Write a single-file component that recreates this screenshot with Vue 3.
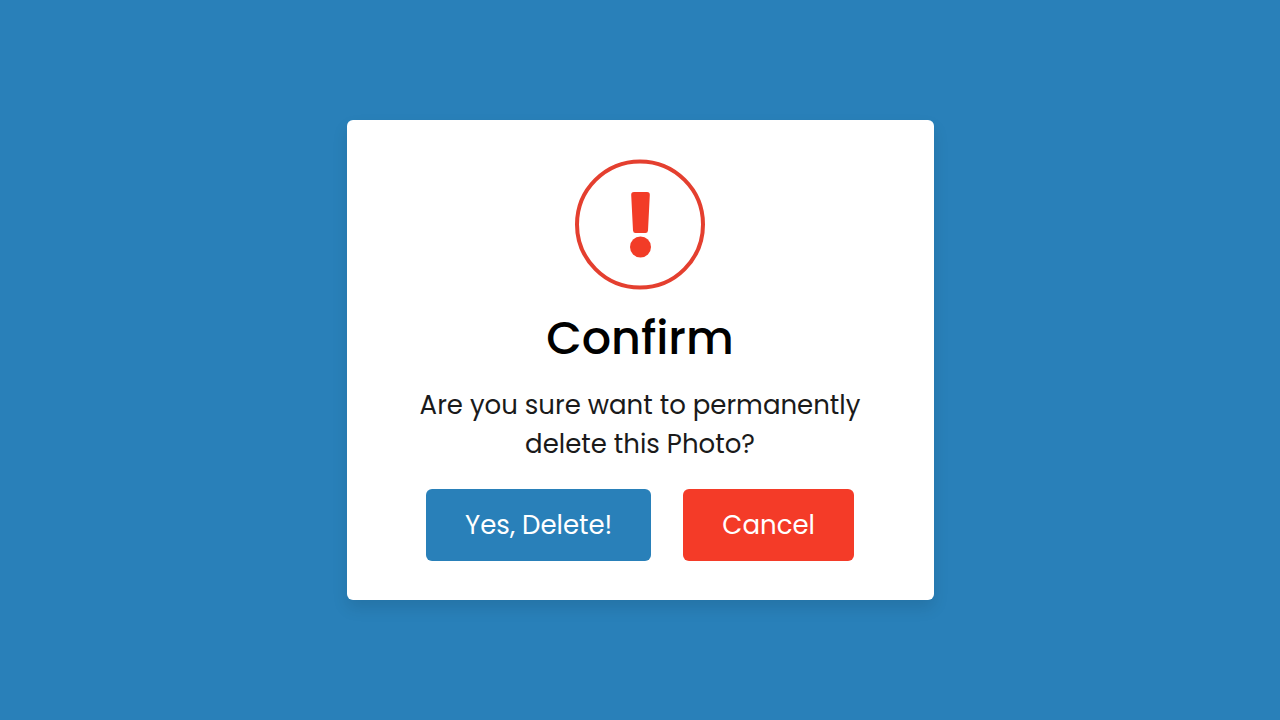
<script setup>
import { ref } from 'vue'

const open = ref(true)
const close = () => { open.value = false }
</script>

<template>
  <main class="page">
    <section v-if="open" class="modal" role="alertdialog" aria-labelledby="title" aria-describedby="message">
      <svg class="icon" viewBox="0 0 130 130" aria-hidden="true">
        <circle cx="65" cy="65.500" r="63" fill="none" stroke="#e43f2f" stroke-width="4" />
        <path d="M59 33H72Q75 33 74.800 36L73 71.500Q72.800 74 70.500 74H60.500Q58.200 74 58 71.500L56.200 36Q56 33 59 33Z" fill="currentColor" />
        <circle cx="65.500" cy="88" r="10.500" fill="currentColor" />
      </svg>
      <h1 id="title">Confirm</h1>
      <p id="message">Are you sure want to permanently delete this Photo?</p>
      <div class="actions">
        <button type="button" class="button confirm" @click="close">Yes, Delete!</button>
        <button type="button" class="button cancel" @click="close">Cancel</button>
      </div>
    </section>
  </main>
</template>

<style>
body {
  margin: 0;
}
</style>

<style scoped>
.page {
  min-height: 100vh;
  display: flex;
  align-items: center;
  justify-content: center;
  background: #2980b9;
  font-family: Poppins, Inter, "Open Sans", sans-serif;
}

.modal {
  box-sizing: border-box;
  width: 100%;
  max-width: 587px;
  padding: 39px 64px;
  display: flex;
  flex-direction: column;
  align-items: center;
  background: #fff;
  border-radius: 6px;
  box-shadow: 0 8px 16px rgba(0, 0, 0, 0.1);
  text-align: center;
}

.icon {
  width: 130px;
  height: 130px;
  overflow: visible;
  color: #f23c27;
}

h1 {
  margin: 17px 0 0;
  font-size: 46px;
  line-height: 64px;
  font-weight: 500;
  color: #000;
}

p {
  margin: 16px 0 0;
  font-size: 26px;
  line-height: 39px;
  font-weight: 400;
  color: #1a1a1a;
}

.actions {
  display: flex;
  gap: 32px;
  margin-top: 25px;
}

.button {
  padding: 16px 39px;
  border: 0;
  border-radius: 6px;
  color: #fff;
  font-family: inherit;
  font-size: 26px;
  line-height: 40px;
  cursor: pointer;
}

.confirm {
  background: #2980b9;
}

.cancel {
  background: #f43b28;
}
</style>
